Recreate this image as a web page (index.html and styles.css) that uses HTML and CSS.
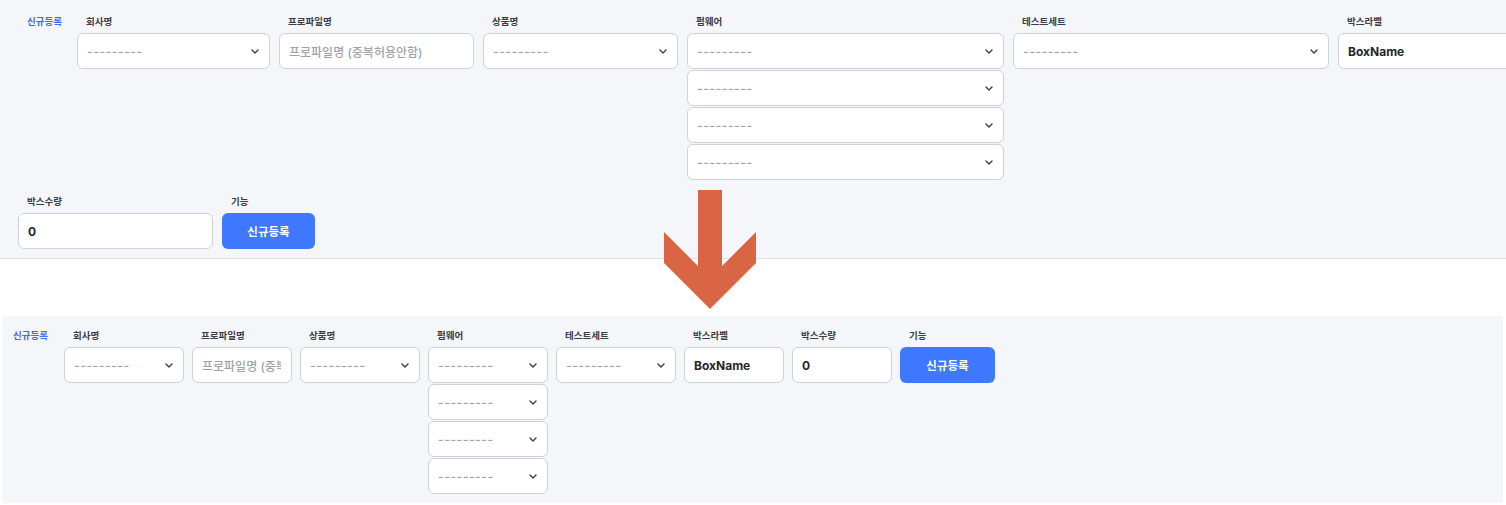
FILE: index.html
```html
<!DOCTYPE html>
<html lang="ko">
<head>
<meta charset="utf-8">
<title>신규등록</title>
<link rel="stylesheet" href="styles.css">
</head>
<body>
<section class="panel panel-top">
  <div class="form form-wide">
    <div class="title">신규등록</div>
    <div class="field w193"><div class="label">회사명</div><div class="box select"><span class="dash">---------</span><svg class="chev" viewBox="0 0 8 5"><path d="M1 1l3 3 3-3"/></svg></div></div>
    <div class="field w195"><div class="label">프로파일명</div><div class="box input"><span class="ph">프로파일명 (중복허용안함)</span></div></div>
    <div class="field w195"><div class="label">상품명</div><div class="box select"><span class="dash">---------</span><svg class="chev" viewBox="0 0 8 5"><path d="M1 1l3 3 3-3"/></svg></div></div>
    <div class="field w317"><div class="label">펌웨어</div>
      <div class="stack">
        <div class="box select"><span class="dash">---------</span><svg class="chev" viewBox="0 0 8 5"><path d="M1 1l3 3 3-3"/></svg></div>
        <div class="box select"><span class="dash">---------</span><svg class="chev" viewBox="0 0 8 5"><path d="M1 1l3 3 3-3"/></svg></div>
        <div class="box select"><span class="dash">---------</span><svg class="chev" viewBox="0 0 8 5"><path d="M1 1l3 3 3-3"/></svg></div>
        <div class="box select"><span class="dash">---------</span><svg class="chev" viewBox="0 0 8 5"><path d="M1 1l3 3 3-3"/></svg></div>
      </div>
    </div>
    <div class="field w316"><div class="label">테스트세트</div><div class="box select"><span class="dash">---------</span><svg class="chev" viewBox="0 0 8 5"><path d="M1 1l3 3 3-3"/></svg></div></div>
    <div class="field w195"><div class="label">박스라벨</div><div class="box input"><span class="val">BoxName</span></div></div>
    <div class="field w195"><div class="label">박스수량</div><div class="box input"><span class="val">0</span></div></div>
    <div class="field w93"><div class="label">기능</div><div class="btn">신규등록</div></div>
  </div>
</section>

<svg class="arrow" viewBox="0 0 92 119"><polygon points="34,0 58,0 58,76 92,42 92,73 46,119 0,73 0,42 34,76"/></svg>

<section class="panel panel-bottom">
  <div class="form">
    <div class="title title-compact">신규등록</div>
    <div class="field w120"><div class="label">회사명</div><div class="box select"><span class="dash">---------</span><svg class="chev" viewBox="0 0 8 5"><path d="M1 1l3 3 3-3"/></svg></div></div>
    <div class="field w100"><div class="label">프로파일명</div><div class="box input"><span class="ph clip">프로파일명 (중복허용안함)</span></div></div>
    <div class="field w120"><div class="label">상품명</div><div class="box select"><span class="dash">---------</span><svg class="chev" viewBox="0 0 8 5"><path d="M1 1l3 3 3-3"/></svg></div></div>
    <div class="field w120"><div class="label">펌웨어</div>
      <div class="stack">
        <div class="box select"><span class="dash">---------</span><svg class="chev" viewBox="0 0 8 5"><path d="M1 1l3 3 3-3"/></svg></div>
        <div class="box select"><span class="dash">---------</span><svg class="chev" viewBox="0 0 8 5"><path d="M1 1l3 3 3-3"/></svg></div>
        <div class="box select"><span class="dash">---------</span><svg class="chev" viewBox="0 0 8 5"><path d="M1 1l3 3 3-3"/></svg></div>
        <div class="box select"><span class="dash">---------</span><svg class="chev" viewBox="0 0 8 5"><path d="M1 1l3 3 3-3"/></svg></div>
      </div>
    </div>
    <div class="field w120"><div class="label">테스트세트</div><div class="box select"><span class="dash">---------</span><svg class="chev" viewBox="0 0 8 5"><path d="M1 1l3 3 3-3"/></svg></div></div>
    <div class="field w100"><div class="label">박스라벨</div><div class="box input"><span class="val">BoxName</span></div></div>
    <div class="field w100"><div class="label">박스수량</div><div class="box input"><span class="val">0</span></div></div>
    <div class="field w95"><div class="label">기능</div><div class="btn">신규등록</div></div>
  </div>
</section>
</body>
</html>
```

FILE: styles.css
```css
* { box-sizing: border-box; }

body {
  margin: 0;
  width: 1506px;
  height: 505px;
  overflow: hidden;
  position: relative;
  background: #ffffff;
  font-family: Inter, "Noto Sans CJK KR", sans-serif;
  color: #2b2e36;
}

.panel {
  background: #f5f6fa;
  overflow: hidden;
}

.panel-top {
  padding: 15px 0 9px 18px;
  border-bottom: 1px solid #dfe1e8;
}

.panel-bottom {
  margin: 57px 3px 0 2px;
  padding: 13px 0 9px 11px;
}

.form {
  display: flex;
  flex-wrap: wrap;
  align-items: flex-start;
  column-gap: 8px;
  row-gap: 15px;
}

.form-wide {
  width: 1580px;
  column-gap: 9px;
}

.title {
  width: 50px;
  padding-left: 9px;
  font-size: 9.5px;
  font-weight: 700;
  line-height: 14px;
  color: #3d6df5;
  white-space: nowrap;
}

.title-compact {
  width: 43px;
  padding-left: 0;
}

.field { flex: none; }
.w93 { width: 93px; }
.w95 { width: 95px; }
.w100 { width: 100px; }
.w120 { width: 120px; }
.w193 { width: 193px; }
.w195 { width: 195px; }
.w316 { width: 316px; }
.w317 { width: 317px; }

.label {
  padding-left: 9px;
  margin-bottom: 4px;
  font-size: 9.5px;
  font-weight: 700;
  line-height: 14px;
  color: #3a3d46;
  white-space: nowrap;
}

.stack {
  display: flex;
  flex-direction: column;
  gap: 1px;
}

.box {
  height: 36px;
  border: 1px solid #cdd1dc;
  border-radius: 6px;
  background: #ffffff;
  display: flex;
  align-items: center;
  padding: 0 10px 0 9px;
  overflow: hidden;
  white-space: nowrap;
}

.select { justify-content: space-between; }

.dash {
  font-size: 12.5px;
  color: #a0a3ad;
  letter-spacing: 0.4px;
  font-weight: 500;
}

.ph {
  font-size: 12px;
  font-weight: 500;
  color: #9fa2ac;
}

.clip {
  min-width: 0;
  overflow: hidden;
}

.val {
  font-size: 12px;
  font-weight: 700;
  color: #23262d;
}

.chev {
  width: 8px;
  height: 5px;
  flex: none;
  fill: none;
  stroke: #3a3d46;
  stroke-width: 1.4;
  stroke-linecap: round;
  stroke-linejoin: round;
}

.btn {
  height: 36px;
  border-radius: 6px;
  background: #3d78ff;
  color: #ffffff;
  font-size: 11.5px;
  font-weight: 700;
  display: flex;
  align-items: center;
  justify-content: center;
}

.arrow {
  position: absolute;
  left: 664px;
  top: 190px;
  width: 92px;
  height: 119px;
  fill: #d96545;
}
```
